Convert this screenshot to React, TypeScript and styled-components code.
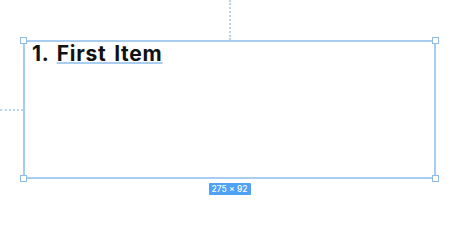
import React from "react";
import styled, { createGlobalStyle } from "styled-components";

const Global = createGlobalStyle`
  html, body { margin: 0; padding: 0; background: #ffffff; }
  body { width: 474px; height: 228px; overflow: hidden; font-family: Inter, "Noto Sans", sans-serif; }
`;

const Stage = styled.div`
  position: relative;
  display: flex;
  align-items: flex-start;
  width: 474px;
  height: 228px;
  padding: 40px 0 0 23px;
  box-sizing: border-box;
`;

const GuideV = styled.div`
  position: absolute;
  left: 229px;
  top: 0;
  height: 40px;
  border-left: 2px dotted #b6d5f1;
`;

const GuideH = styled.div`
  position: absolute;
  left: 0;
  top: 109px;
  width: 23px;
  border-top: 2px dotted #b6d5f1;
`;

const Selection = styled.div`
  position: relative;
  display: flex;
  flex-direction: column;
  width: 413px;
  height: 139px;
  padding: 1px 0 0 7px;
  border: 2px solid #a8cdf1;
  box-sizing: border-box;
`;

const Handle = styled.span<{ $x: "l" | "r"; $y: "t" | "b" }>`
  position: absolute;
  width: 5px;
  height: 5px;
  background: #fff;
  border: 1px solid #8fbbe6;
  ${(p) => (p.$x === "l" ? "left: -5px;" : "right: -5px;")}
  ${(p) => (p.$y === "t" ? "top: -5px;" : "bottom: -5px;")}
`;

const Heading = styled.div`
  font-family: Inter, "Noto Sans", sans-serif;
  font-weight: 700;
  font-size: 21px;
  line-height: 22px;
  color: #111;
  letter-spacing: 0.75px;
  word-spacing: 2px;
`;

const Marked = styled.span`
  text-decoration: underline;
  text-decoration-color: #a8cdf1;
  text-decoration-thickness: 1.5px;
  text-underline-offset: 1px;
`;

const SizeLabel = styled.div`
  position: absolute;
  left: 50%;
  bottom: -18px;
  transform: translateX(-50%);
  background: #4ea1f3;
  color: #fff;
  font-family: Inter, "Noto Sans", sans-serif;
  font-size: 8.5px;
  font-weight: 500;
  line-height: 12px;
  padding: 0 3px;
  border-radius: 1px;
  white-space: nowrap;
`;

export default function App() {
  return (
    <>
      <Global />
      <Stage>
        <GuideV />
        <GuideH />
        <Selection>
          <Handle $x="l" $y="t" />
          <Handle $x="r" $y="t" />
          <Handle $x="l" $y="b" />
          <Handle $x="r" $y="b" />
          <Heading>
            1. <Marked>First Item</Marked>
          </Heading>
          <SizeLabel>275 × 92</SizeLabel>
        </Selection>
      </Stage>
    </>
  );
}
